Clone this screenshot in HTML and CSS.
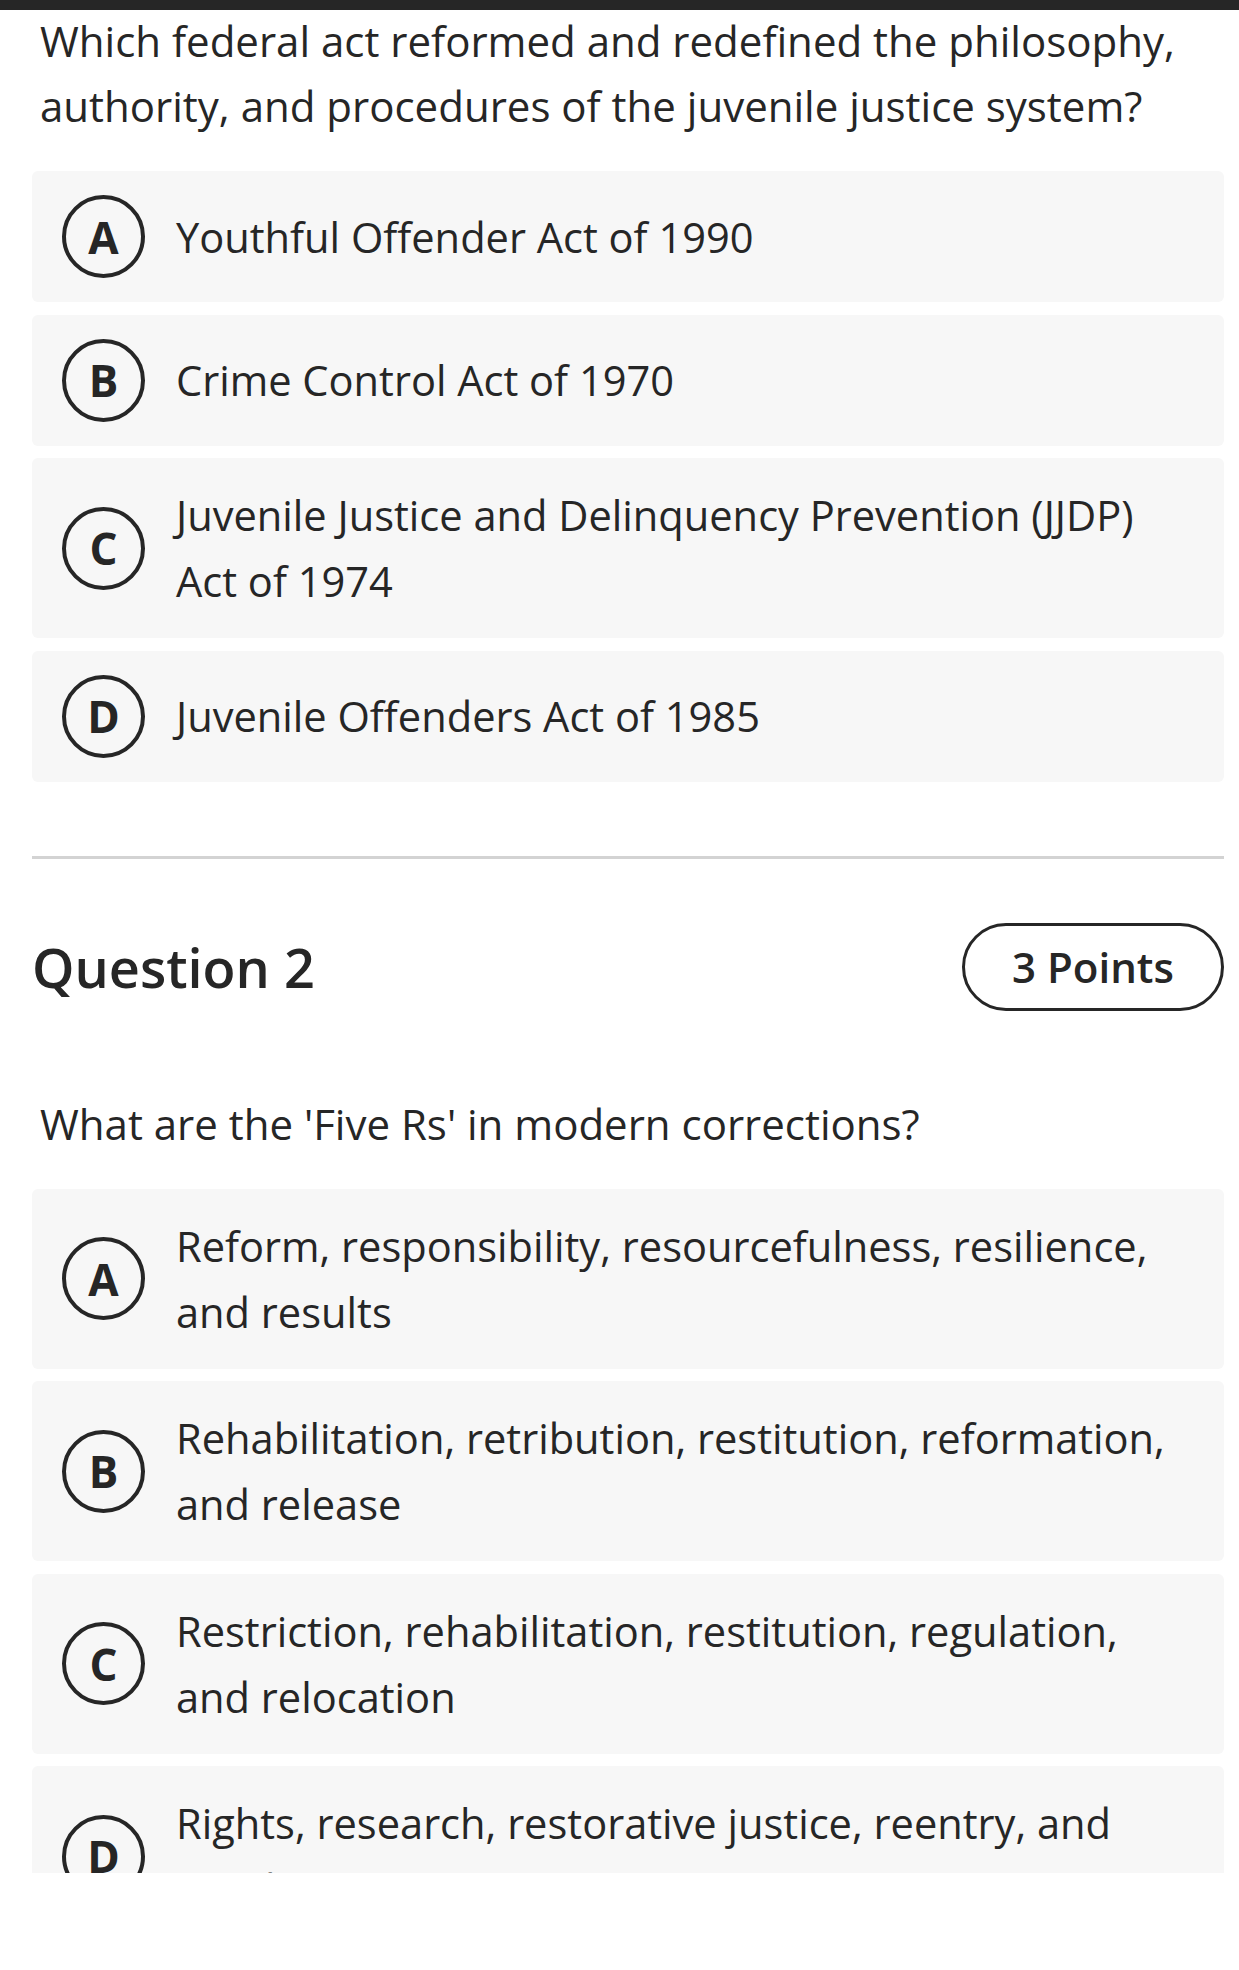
FILE: index.html
```html
<!DOCTYPE html>
<html lang="en">
<head>
    <meta charset="UTF-8">
    <meta name="viewport" content="width=device-width, initial-scale=1.0">
    <title>Quiz</title>
    <link rel="stylesheet" href="styles.css">
</head>
<body>
    <div class="top-bar"></div>

    <div class="scroll-area">
        <section class="question">
            <p class="question-text">Which federal act reformed and redefined the philosophy, authority, and procedures of the juvenile justice system?</p>

            <div class="options">
                <div class="option">
                    <span class="letter">A</span>
                    <span class="option-text">Youthful Offender Act of 1990</span>
                </div>
                <div class="option">
                    <span class="letter">B</span>
                    <span class="option-text">Crime Control Act of 1970</span>
                </div>
                <div class="option">
                    <span class="letter">C</span>
                    <span class="option-text">Juvenile Justice and Delinquency Prevention (JJDP) Act of 1974</span>
                </div>
                <div class="option">
                    <span class="letter">D</span>
                    <span class="option-text">Juvenile Offenders Act of 1985</span>
                </div>
            </div>
        </section>

        <hr class="divider">

        <section class="question">
            <div class="question-header">
                <h2>Question 2</h2>
                <span class="points">3 Points</span>
            </div>

            <p class="question-text">What are the 'Five Rs' in modern corrections?</p>

            <div class="options">
                <div class="option">
                    <span class="letter">A</span>
                    <span class="option-text">Reform, responsibility, resourcefulness, resilience, and results</span>
                </div>
                <div class="option">
                    <span class="letter">B</span>
                    <span class="option-text">Rehabilitation, retribution, restitution, reformation, and release</span>
                </div>
                <div class="option">
                    <span class="letter">C</span>
                    <span class="option-text">Restriction, rehabilitation, restitution, regulation, and relocation</span>
                </div>
                <div class="option">
                    <span class="letter">D</span>
                    <span class="option-text">Rights, research, restorative justice, reentry, and rehabilitation</span>
                </div>
            </div>
        </section>
    </div>
</body>
</html>
```

FILE: styles.css
```css
body {
    margin: 0;
    font-family: 'Open Sans', 'Liberation Sans', sans-serif;
    color: #262626;
    background: white;
}

.top-bar {
    height: 10px;
    background: #262626;
}

.scroll-area {
    height: 1863px;
    overflow: hidden;
    padding: 0 15px 0 32px;
}

.question-text {
    margin: -2px 0 33px 8px;
    font-size: 42px;
    line-height: 65px;
}

.options {
    display: flex;
    flex-direction: column;
    gap: 12.5px;
}

.option {
    display: flex;
    align-items: center;
    gap: 31px;
    padding: 24px 40px 24px 30px;
    background: #f7f7f7;
    border-radius: 6px;
}

.letter {
    flex: none;
    display: flex;
    align-items: center;
    justify-content: center;
    width: 83px;
    height: 83px;
    box-sizing: border-box;
    border: 4px solid #262626;
    border-radius: 50%;
    font-size: 44px;
    font-weight: 700;
    line-height: 1;
}

.option-text {
    font-size: 41.6px;
    line-height: 66px;
}

.divider {
    margin: 74px 0 64px;
    border: none;
    height: 3px;
    background: #d3d3d3;
}

.question-header {
    display: flex;
    justify-content: space-between;
    align-items: center;
    margin-bottom: 82px;
}

.question-header h2 {
    margin: 0;
    font-size: 54px;
    font-weight: 600;
}

.points {
    display: flex;
    align-items: center;
    justify-content: center;
    width: 262px;
    height: 88px;
    box-sizing: border-box;
    border: 3px solid #262626;
    border-radius: 44px;
    font-size: 42px;
    font-weight: 600;
}
```
